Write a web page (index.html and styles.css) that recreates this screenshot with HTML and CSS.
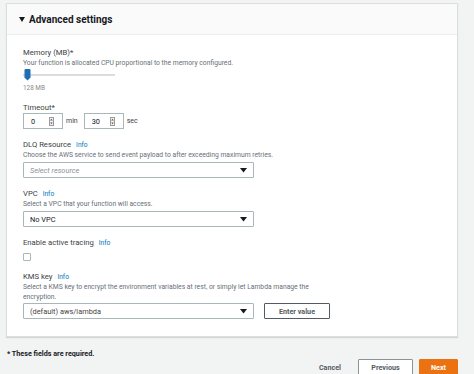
FILE: index.html
```html
<!DOCTYPE html>
<html lang="en">
<head>
    <meta charset="UTF-8">
    <title>Advanced settings</title>
    <link rel="stylesheet" href="styles.css">
</head>
<body>
    <div class="page">
        <section class="panel">
            <header class="panel-head">
                <span class="caret"></span>
                <h2>Advanced settings</h2>
            </header>

            <div class="panel-body">
                <!-- Memory -->
                <div class="field memory">
                    <div class="label">Memory (MB)*</div>
                    <div class="desc">Your function is allocated CPU proportional to the memory configured.</div>
                    <div class="slider">
                        <div class="track"></div>
                        <svg class="thumb" width="7" height="12" viewBox="0 0 7 12">
                            <path d="M0.5 1 Q0.5 0 1.5 0 H5.5 Q6.5 0 6.5 1 V8.5 L3.5 11.5 L0.5 8.5 Z" fill="#1f6fb5"/>
                        </svg>
                    </div>
                    <div class="slider-value">128 MB</div>
                </div>

                <!-- Timeout -->
                <div class="field timeout">
                    <div class="label">Timeout*</div>
                    <div class="time-row">
                        <div class="num-input">
                            <span>0</span>
                            <svg class="spin" width="5" height="9" viewBox="0 0 5 9">
                                <rect x="0.5" y="0.5" width="4" height="8" fill="#f4f4f4" stroke="#9a9a9a"/>
                                <path d="M1.2 3.6 L2.5 1.8 L3.8 3.6 Z M1.2 5.4 L2.5 7.2 L3.8 5.4 Z" fill="#555"/>
                            </svg>
                        </div>
                        <span class="unit">min</span>
                        <div class="num-input">
                            <span>30</span>
                            <svg class="spin" width="5" height="9" viewBox="0 0 5 9">
                                <rect x="0.5" y="0.5" width="4" height="8" fill="#f4f4f4" stroke="#9a9a9a"/>
                                <path d="M1.2 3.6 L2.5 1.8 L3.8 3.6 Z M1.2 5.4 L2.5 7.2 L3.8 5.4 Z" fill="#555"/>
                            </svg>
                        </div>
                        <span class="unit">sec</span>
                    </div>
                </div>

                <!-- DLQ -->
                <div class="field">
                    <div class="label">DLQ Resource <a class="info">Info</a></div>
                    <div class="desc">Choose the AWS service to send event payload to after exceeding maximum retries.</div>
                    <div class="select">
                        <span class="placeholder">Select resource</span>
                        <svg class="arrow" width="7" height="5" viewBox="0 0 7 5"><path d="M0 0 H7 L3.5 4.5 Z" fill="#16191f"/></svg>
                    </div>
                </div>

                <!-- VPC -->
                <div class="field">
                    <div class="label">VPC <a class="info">Info</a></div>
                    <div class="desc">Select a VPC that your function will access.</div>
                    <div class="select">
                        <span class="value">No VPC</span>
                        <svg class="arrow" width="7" height="5" viewBox="0 0 7 5"><path d="M0 0 H7 L3.5 4.5 Z" fill="#16191f"/></svg>
                    </div>
                </div>

                <!-- Tracing -->
                <div class="field">
                    <div class="label">Enable active tracing <a class="info">Info</a></div>
                    <div class="checkbox"></div>
                </div>

                <!-- KMS -->
                <div class="field kms">
                    <div class="label">KMS key <a class="info">Info</a></div>
                    <div class="desc">Select a KMS key to encrypt the environment variables at rest, or simply let Lambda manage the encryption.</div>
                    <div class="kms-row">
                        <div class="select">
                            <span class="value light">(default) aws/lambda</span>
                            <svg class="arrow" width="7" height="5" viewBox="0 0 7 5"><path d="M0 0 H7 L3.5 4.5 Z" fill="#16191f"/></svg>
                        </div>
                        <button class="btn">Enter value</button>
                    </div>
                </div>
            </div>
        </section>

        <div class="footer">
            <div class="required">* These fields are required.</div>
            <div class="actions">
                <button class="btn-link">Cancel</button>
                <button class="btn">Previous</button>
                <button class="btn primary">Next</button>
            </div>
        </div>
    </div>
</body>
</html>
```

FILE: styles.css
```css
body {
    margin: 0;
    background-color: #f2f3f3;
    font-family: Roboto, "Open Sans", sans-serif;
    color: #16191f;
}
.page {
    padding: 3px 16px 0 6px;
    width: 452px;
}
.panel {
    background: #fff;
    border: 1px solid #dcdedf;
    box-shadow: 0 1px 1px rgba(0, 0, 0, 0.12);
}
.panel-head {
    display: flex;
    align-items: center;
    height: 30px;
    padding-left: 12px;
    background: #fafafa;
    border-bottom: 1px solid #eaeded;
}
.caret {
    width: 0;
    height: 0;
    border-left: 3px solid transparent;
    border-right: 3px solid transparent;
    border-top: 5px solid #16191f;
    margin-right: 4px;
}
.panel-head h2 {
    margin: 0;
    font-size: 10px;
    font-weight: bold;
}
.panel-body {
    padding: 13px 16px 17px 16px;
}
.field {
    margin-top: 11px;
}
.field:first-child {
    margin-top: 0;
}
.label {
    font-size: 7.7px;
    line-height: 10px;
    color: #3b3f44;
}
.info {
    color: #0073bb;
    font-size: 6.6px;
    margin-left: 3px;
}
.desc {
    font-size: 6.75px;
    line-height: 10px;
    color: #687078;
    max-width: 305px;
    margin-bottom: 2px;
}
.memory .desc {
    margin-bottom: 0;
}
.slider {
    position: relative;
    width: 92px;
    height: 14px;
}
.track {
    position: absolute;
    left: 0;
    right: 0;
    top: 6px;
    height: 2px;
    background: #dcdcdc;
}
.thumb {
    position: absolute;
    left: 1px;
    top: 1px;
}
.slider-value {
    font-size: 6.4px;
    line-height: 10px;
    color: #888;
    margin-top: 1px;
}
.timeout {
    margin-top: 10px;
}
.time-row {
    display: flex;
    align-items: center;
}
.num-input {
    display: flex;
    align-items: center;
    justify-content: space-between;
    width: 40px;
    height: 16px;
    box-sizing: border-box;
    padding: 0 8px 0 7px;
    border: 1px solid #aab7b8;
    font-size: 7.4px;
}
.unit {
    font-size: 7px;
    color: #444;
    margin: 0 6px 0 3px;
}
.select {
    display: flex;
    align-items: center;
    justify-content: space-between;
    width: 231px;
    height: 16px;
    box-sizing: border-box;
    padding: 0 6px 0 6px;
    border: 1px solid #aab7b8;
    border-radius: 1px;
    font-size: 7.4px;
}
.placeholder {
    font-style: italic;
    color: #879596;
}
.value {
    color: #16191f;
}
.value.light {
    color: #444;
}
.checkbox {
    width: 8px;
    height: 8px;
    box-sizing: border-box;
    border: 1px solid #aab7b8;
    border-radius: 1px;
    margin-top: 5px;
}
.kms .desc {
    margin-bottom: 1px;
}
.kms-row {
    display: flex;
    align-items: center;
    gap: 10px;
}
.btn {
    height: 16px;
    box-sizing: border-box;
    padding: 0 9px;
    background: #fff;
    border: 1px solid #545b64;
    border-radius: 1px;
    font-family: inherit;
    font-size: 7.2px;
    font-weight: bold;
    color: #545b64;
    width: 66px;
}
.footer {
    padding-top: 12px;
}
.required {
    font-size: 7.2px;
    font-weight: bold;
    line-height: 10px;
    padding-left: 1px;
}
.actions {
    display: flex;
    justify-content: flex-end;
    align-items: center;
    gap: 6px;
}
.actions .btn {
    height: 17px;
    width: 55px;
    padding: 0;
    border-color: #879596;
}
.actions .btn.primary {
    width: 39px;
    background: #ec7211;
    border-color: #ec7211;
    color: #fff;
}
.btn-link {
    background: none;
    border: none;
    font-family: inherit;
    font-size: 7.2px;
    font-weight: bold;
    color: #545b64;
    margin-right: 11px;
    padding: 0;
}
```
